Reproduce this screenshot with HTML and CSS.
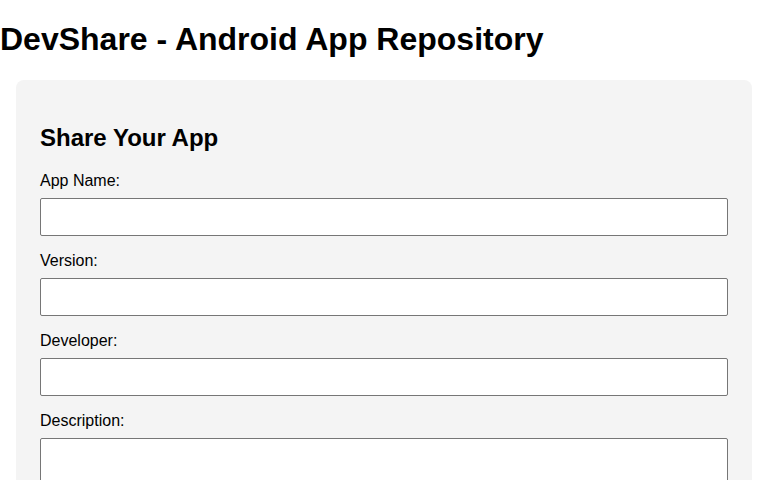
FILE: index.html
```html
<!DOCTYPE html>
<html lang="en">
<head>
<meta charset="utf-8">
<title>DevShare - Android App Repository</title>
<link rel="stylesheet" href="styles.css">
</head>
<body>
<h1 class="title">DevShare - Android App Repository</h1>
<section class="card">
  <h2 class="card-title">Share Your App</h2>
  <form class="form">
    <label class="label" for="name">App Name:</label>
    <input class="field" id="name" type="text">
    <label class="label" for="version">Version:</label>
    <input class="field" id="version" type="text">
    <label class="label" for="dev">Developer:</label>
    <input class="field" id="dev" type="text">
    <label class="label" for="desc">Description:</label>
    <textarea class="field area" id="desc"></textarea>
  </form>
</section>
</body>
</html>
```
FILE: styles.css
```css
html, body {
  margin: 0;
  padding: 0;
  background: #fff;
  font-family: "Liberation Sans", Arial, sans-serif;
  color: #000;
}
.title {
  font-size: 32px;
  font-weight: bold;
  margin: 21.44px 0;
  line-height: 37px;
}
.card {
  margin: 0 16px;
  padding: 24px;
  background: #f4f4f4;
  border-radius: 8px;
}
.card-title {
  font-size: 24px;
  font-weight: bold;
  margin: 19.92px 0 21px;
  line-height: 27.6px;
}
.form {
  display: flex;
  flex-direction: column;
}
.label {
  display: block;
  font-size: 16px;
  line-height: 18px;
  margin-bottom: 8px;
}
.field {
  box-sizing: border-box;
  width: 100%;
  height: 38px;
  margin: 0 0 16px;
  padding: 8px;
  border: 1px solid #767676;
  border-radius: 2px;
  background: #fff;
  font-family: inherit;
  font-size: 16px;
}
.area {
  height: 100px;
  resize: vertical;
}
```
